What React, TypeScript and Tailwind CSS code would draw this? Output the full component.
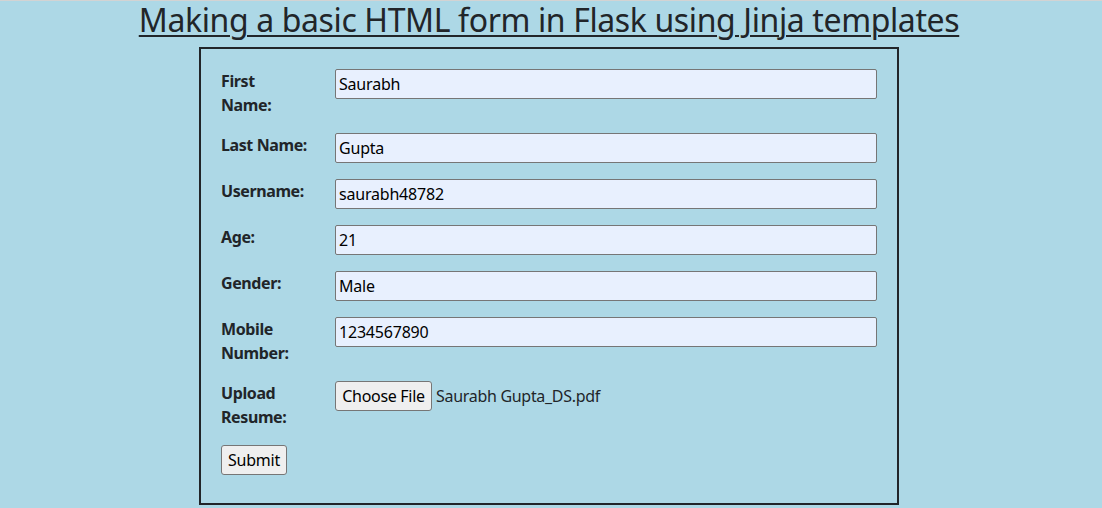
import React from "react";

const font = { fontFamily: '"Noto Sans", "Open Sans", sans-serif' };

function Row({ label, children }: { label: React.ReactNode; children: React.ReactNode }) {
  return (
    <div className="flex items-start mb-4">
      <label className="w-[114px] shrink-0 text-[16px] leading-[24px] font-bold text-[#212529] tracking-[-0.4px]">{label}</label>
      <div className="flex-1 flex items-center">{children}</div>
    </div>
  );
}

function TextInput({ value }: { value: string }) {
  return (
    <input
      readOnly
      value={value}
      className="w-full h-[30px] border border-[#767676] bg-[#e8f0fe] rounded-[2px] px-[3px] text-[16px] text-black outline-none tracking-[-0.2px]"
    />
  );
}

export default function App() {
  return (
    <div className="min-h-[508px] bg-[#add8e6] border-t border-[#d3d3d3] text-[#212529]" style={font}>
      <div className="pr-[4px]">
        <h1 className="text-center text-[32px] leading-[38px] pt-0 pb-[8px] font-normal underline decoration-[2px] underline-offset-[3px] tracking-[-0.38px]">
          Making a basic HTML form in Flask using Jinja templates
        </h1>
        <div className="mx-auto w-[700px] border-2 border-[#212529] pt-[20px] px-[20px] pb-[12px]">
          <Row label={<>First<br />Name:</>}>
            <TextInput value="Saurabh" />
          </Row>
          <Row label="Last Name:">
            <TextInput value="Gupta" />
          </Row>
          <Row label="Username:">
            <TextInput value="saurabh48782" />
          </Row>
          <Row label="Age:">
            <TextInput value="21" />
          </Row>
          <Row label="Gender:">
            <TextInput value="Male" />
          </Row>
          <Row label={<>Mobile<br />Number:</>}>
            <TextInput value="1234567890" />
          </Row>
          <Row label={<>Upload<br />Resume:</>}>
            <button className="h-[30px] w-[97px] bg-[#efefef] border border-[#767676] rounded-[3px] text-[16px] text-black tracking-[-0.3px]">
              Choose File
            </button>
            <span className="ml-[4px] text-[16px] text-[#212529] tracking-[-0.3px]">Saurabh Gupta_DS.pdf</span>
          </Row>
          <button className="h-[30px] w-[66px] bg-[#efefef] border border-[#767676] rounded-[3px] text-[16px] text-black mb-4 tracking-[-0.2px]">
            Submit
          </button>
        </div>
      </div>
    </div>
  );
}
